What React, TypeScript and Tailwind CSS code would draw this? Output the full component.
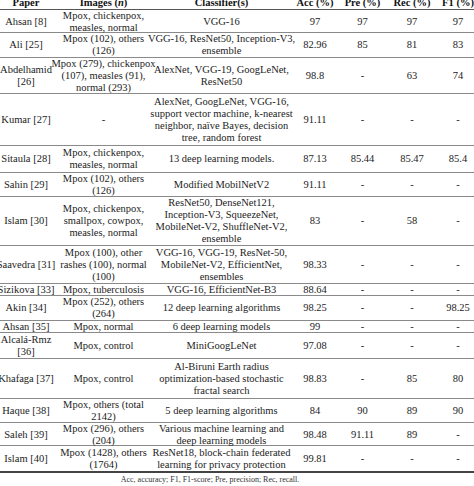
import React from "react";

type Row = {
  h: string;
  paper: string[];
  images: string[];
  cls: string[];
  acc: string;
  pre: string;
  rec: string;
  f1: string;
  last?: boolean;
};

const rows: Row[] = [
  { h: "h-[23px]", paper: ["Ahsan [8]"], images: ["Mpox, chickenpox,", "measles, normal"], cls: ["VGG-16"], acc: "97", pre: "97", rec: "97", f1: "97" },
  { h: "h-[25px]", paper: ["Ali [25]"], images: ["Mpox (102), others", "(126)"], cls: ["VGG-16, ResNet50, Inception-V3,", "ensemble"], acc: "82.96", pre: "85", rec: "81", f1: "83" },
  { h: "h-[36px]", paper: ["Abdelhamid", "[26]"], images: ["Mpox (279), chickenpox", "(107), measles (91),", "normal (293)"], cls: ["AlexNet, VGG-19, GoogLeNet,", "ResNet50"], acc: "98.8", pre: "-", rec: "63", f1: "74" },
  { h: "h-[52px]", paper: ["Kumar [27]"], images: ["-"], cls: ["AlexNet, GoogLeNet, VGG-16,", "support vector machine, k-nearest", "neighbor, naïve Bayes, decision", "tree, random forest"], acc: "91.11", pre: "-", rec: "-", f1: "-" },
  { h: "h-[27px]", paper: ["Sitaula [28]"], images: ["Mpox, chickenpox,", "measles, normal"], cls: ["13 deep learning models."], acc: "87.13", pre: "85.44", rec: "85.47", f1: "85.4" },
  { h: "h-[24px]", paper: ["Sahin [29]"], images: ["Mpox (102), others", "(126)"], cls: ["Modified MobilNetV2"], acc: "91.11", pre: "-", rec: "-", f1: "-" },
  { h: "h-[49px]", paper: ["Islam [30]"], images: ["Mpox, chickenpox,", "smallpox, cowpox,", "measles, normal"], cls: ["ResNet50, DenseNet121,", "Inception-V3, SqueezeNet,", "MobileNet-V2, ShuffleNet-V2,", "ensemble"], acc: "83", pre: "-", rec: "58", f1: "-" },
  { h: "h-[38px]", paper: ["Saavedra [31]"], images: ["Mpox (100), other", "rashes (100), normal", "(100)"], cls: ["VGG-16, VGG-19, ResNet-50,", "MobileNet-V2, EfficientNet,", "ensembles"], acc: "98.33", pre: "-", rec: "-", f1: "-" },
  { h: "h-[12px]", paper: ["Sizikova [33]"], images: ["Mpox, tuberculosis"], cls: ["VGG-16, EfficientNet-B3"], acc: "88.64", pre: "-", rec: "-", f1: "-" },
  { h: "h-[25px]", paper: ["Akin [34]"], images: ["Mpox (252), others", "(264)"], cls: ["12 deep learning algorithms"], acc: "98.25", pre: "-", rec: "-", f1: "98.25" },
  { h: "h-[12px]", paper: ["Ahsan [35]"], images: ["Mpox, normal"], cls: ["6 deep learning models"], acc: "99", pre: "-", rec: "-", f1: "-" },
  { h: "h-[26px]", paper: ["Alcalá-Rmz", "[36]"], images: ["Mpox, control"], cls: ["MiniGoogLeNet"], acc: "97.08", pre: "-", rec: "-", f1: "-" },
  { h: "h-[40px]", paper: ["Khafaga [37]"], images: ["Mpox, control"], cls: ["Al-Biruni Earth radius", "optimization-based stochastic", "fractal search"], acc: "98.83", pre: "-", rec: "85", f1: "80" },
  { h: "h-[24px]", paper: ["Haque [38]"], images: ["Mpox, others (total", "2142)"], cls: ["5 deep learning algorithms"], acc: "84", pre: "90", rec: "89", f1: "90" },
  { h: "h-[23px]", paper: ["Saleh [39]"], images: ["Mpox (296), others", "(204)"], cls: ["Various machine learning and", "deep learning models"], acc: "98.48", pre: "91.11", rec: "89", f1: "-" },
  { h: "h-[27px]", paper: ["Islam [40]"], images: ["Mpox (1428), others", "(1764)"], cls: ["ResNet18, block-chain federated", "learning for privacy protection"], acc: "99.81", pre: "-", rec: "-", f1: "-", last: true },
];

const grid = "grid grid-cols-[52px_103px_133px_54px_41px_58px_34px]";

function Cell({ lines }: { lines: string[] }) {
  return (
    <div className="flex flex-col items-center justify-center">
      {lines.map((l, i) => (
        <span key={i} className="whitespace-nowrap">
          {l}
        </span>
      ))}
    </div>
  );
}

export default function App() {
  return (
    <div className="h-[486px] w-[474px] overflow-hidden bg-white [font-family:'Liberation_Serif','Times_New_Roman',serif] text-[10.5px] leading-[12px] text-[#1c1c1c]">
      <div className="-mt-[3px] w-[475px]">
        <div className={`${grid} h-[13px] border-b-[1.5px] border-[#555] font-bold text-[#111]`}>
          <Cell lines={["Paper"]} />
          <div className="flex items-center justify-center whitespace-nowrap">
            Images (<i>n</i>)
          </div>
          <Cell lines={["Classifier(s)"]} />
          <Cell lines={["Acc (%)"]} />
          <Cell lines={["Pre (%)"]} />
          <Cell lines={["Rec (%)"]} />
          <Cell lines={["F1 (%)"]} />
        </div>
        {rows.map((r, i) => (
          <div
            key={i}
            className={`${grid} ${r.h} ${
              r.last ? "border-b-2 border-[#444]" : "border-b-[1.5px] border-[#8a8a8a]"
            }`}
          >
            <Cell lines={r.paper} />
            <Cell lines={r.images} />
            <Cell lines={r.cls} />
            <Cell lines={[r.acc]} />
            <Cell lines={[r.pre]} />
            <Cell lines={[r.rec]} />
            <Cell lines={[r.f1]} />
          </div>
        ))}
        <p className="mt-[2px] w-[420px] text-center text-[8px] leading-[10px] text-[#333]">
          Acc, accuracy; F1, F1-score; Pre, precision; Rec, recall.
        </p>
      </div>
    </div>
  );
}
